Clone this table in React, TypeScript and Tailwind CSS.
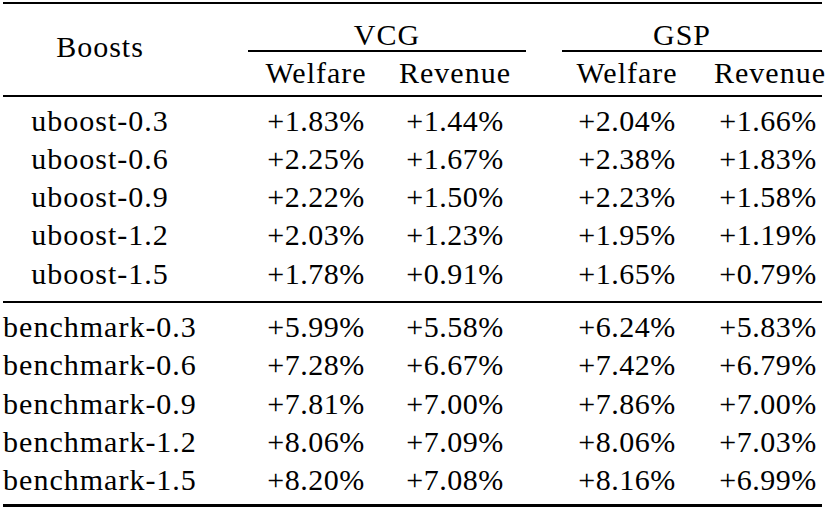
const rows: string[][] = [
  ["uboost-0.3", "+1.83%", "+1.44%", "+2.04%", "+1.66%"],
  ["uboost-0.6", "+2.25%", "+1.67%", "+2.38%", "+1.83%"],
  ["uboost-0.9", "+2.22%", "+1.50%", "+2.23%", "+1.58%"],
  ["uboost-1.2", "+2.03%", "+1.23%", "+1.95%", "+1.19%"],
  ["uboost-1.5", "+1.78%", "+0.91%", "+1.65%", "+0.79%"],
];

const benchmarks: string[][] = [
  ["benchmark-0.3", "+5.99%", "+5.58%", "+6.24%", "+5.83%"],
  ["benchmark-0.6", "+7.28%", "+6.67%", "+7.42%", "+6.79%"],
  ["benchmark-0.9", "+7.81%", "+7.00%", "+7.86%", "+7.00%"],
  ["benchmark-1.2", "+8.06%", "+7.09%", "+8.06%", "+7.03%"],
  ["benchmark-1.5", "+8.20%", "+7.08%", "+8.16%", "+6.99%"],
];

// column tracks: label | vcg welfare | vcg revenue | gsp welfare | gsp revenue
const grid = "grid grid-cols-[245px_136px_142px_166px_130px]";

function Row({ cells }: { cells: string[] }) {
  return (
    <div className={`${grid} text-center leading-[38.3px] tracking-[0.5px]`}>
      <div className="pr-[51px] tracking-[1px]">{cells[0]}</div>
      <div>{cells[1]}</div>
      <div>{cells[2]}</div>
      <div className="pl-[36px]">{cells[3]}</div>
      <div className="pl-[22px]">{cells[4]}</div>
    </div>
  );
}

export default function App() {
  return (
    <div className="h-[509px] w-[825px] overflow-hidden bg-white pt-[2px] font-['Liberation_Serif','Times_New_Roman',serif] text-[30px] text-black">
      <div className="ml-[3px] w-[819px]">
        <div className="h-[2px] bg-black" />

        {/* header */}
        <div className={`${grid} pt-[16px] text-center leading-[30px] tracking-[1px]`}>
          <div className="row-span-3 pt-[12px] pr-[51px]">Boosts</div>
          <div className="col-span-2">VCG</div>
          <div className="col-span-2 pr-[20px] pl-[36px]">GSP</div>
          <div className="col-span-2 h-[1.5px] bg-black" />
          <div className="col-span-2 pl-[36px]">
            <div className="h-[1.5px] bg-black" />
          </div>
          <div className="pt-[6px]">Welfare</div>
          <div className="pt-[6px]">Revenue</div>
          <div className="pt-[6px] pl-[36px]">Welfare</div>
          <div className="pt-[6px] pl-[22px]">Revenue</div>
        </div>

        <div className="mt-[7px] h-[2px] bg-black" />
        <div className="pt-[5px] pb-[8px]">
          {rows.map((r) => (
            <Row key={r[0]} cells={r} />
          ))}
        </div>

        <div className="h-[2px] bg-black" />
        <div className="pt-[5px] pb-[5px]">
          {benchmarks.map((r) => (
            <Row key={r[0]} cells={r} />
          ))}
        </div>
        <div className="h-[3px] bg-black" />
      </div>
    </div>
  );
}
